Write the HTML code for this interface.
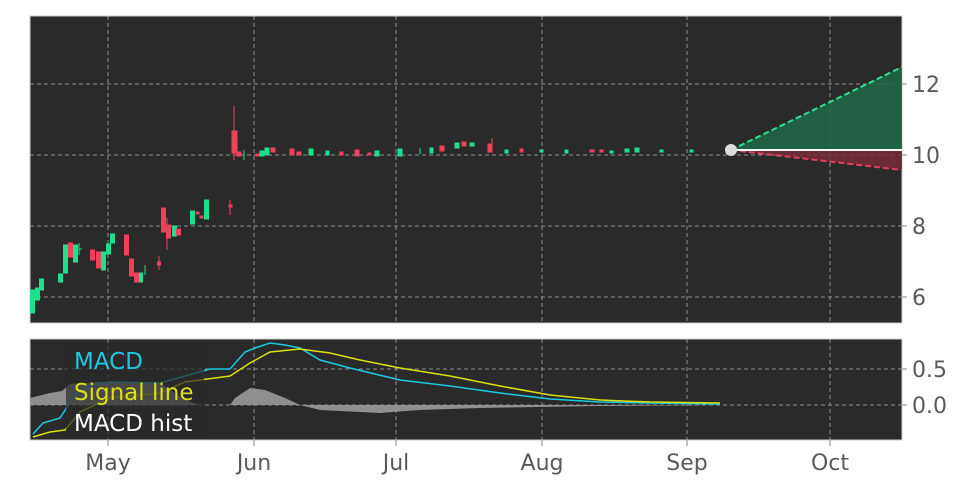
<!DOCTYPE html>
<html><head><style>body{margin:0;background:#fff;}svg{display:block;font-family:"DejaVu Sans","Liberation Sans",sans-serif;}</style></head><body>
<svg width="972" height="486" viewBox="0 0 972 486">
<rect x="30" y="16" width="872" height="307" fill="#2a2a2a"/>
<rect x="30" y="339" width="872" height="101" fill="#2a2a2a"/>
<g stroke="#aaa" stroke-width="1" stroke-dasharray="4,3" opacity="0.8">
<line x1="30" y1="84" x2="902" y2="84"/><line x1="30" y1="155" x2="902" y2="155"/><line x1="30" y1="226" x2="902" y2="226"/><line x1="30" y1="297" x2="902" y2="297"/>
<line x1="30" y1="369" x2="902" y2="369"/><line x1="30" y1="405" x2="902" y2="405"/>
<line x1="108" y1="16" x2="108" y2="323"/><line x1="254" y1="16" x2="254" y2="323"/><line x1="396" y1="16" x2="396" y2="323"/><line x1="542" y1="16" x2="542" y2="323"/><line x1="687" y1="16" x2="687" y2="323"/><line x1="830" y1="16" x2="830" y2="323"/>
<line x1="108" y1="339" x2="108" y2="440"/><line x1="254" y1="339" x2="254" y2="440"/><line x1="396" y1="339" x2="396" y2="440"/><line x1="542" y1="339" x2="542" y2="440"/><line x1="687" y1="339" x2="687" y2="440"/><line x1="830" y1="339" x2="830" y2="440"/>
</g>
<g stroke="#ccc" stroke-width="1">
<rect x="30" y="16" width="872" height="307" fill="none"/>
<rect x="30" y="339" width="872" height="101" fill="none"/>
</g>
<polygon points="731,150 902,67 902,150" fill="#1f6b4a" opacity="0.85"/>
<polygon points="731,150 902,150 902,170" fill="#7a2b3a" opacity="0.8"/>
<line x1="731" y1="150" x2="902" y2="67" stroke="#2ee08a" stroke-width="2" stroke-dasharray="6,3"/>
<line x1="731" y1="150" x2="902" y2="170" stroke="#e0405a" stroke-width="2" stroke-dasharray="6,3"/>
<line x1="731" y1="150" x2="902" y2="150" stroke="#fff" stroke-width="2"/>
<circle cx="731" cy="150" r="6" fill="#ddd"/>
<g fill="#1fe08a" stroke="#1fe08a" stroke-width="1">
<rect x="30.5" y="290" width="4" height="23"/><rect x="35.5" y="288" width="4" height="12"/><rect x="39.5" y="279" width="4" height="11"/><rect x="58.5" y="274" width="4" height="8"/><rect x="63.5" y="245" width="4" height="28"/><rect x="73.5" y="245" width="4" height="17"/><rect x="101.5" y="252" width="4" height="18"/><rect x="106.5" y="244" width="4" height="10"/><rect x="110.5" y="234" width="4" height="9"/><rect x="138.5" y="273" width="4" height="9"/><rect x="172.5" y="226" width="4" height="10"/><rect x="190.5" y="211" width="4" height="13"/><rect x="204.5" y="200" width="4" height="19"/>
<rect x="260" y="151" width="4" height="5"/><rect x="265" y="148" width="4" height="7"/><rect x="309" y="149" width="4" height="6"/><rect x="326" y="151" width="3" height="4"/><rect x="375" y="151" width="4" height="5"/><rect x="398" y="149" width="4" height="7"/><rect x="430" y="148" width="3" height="5"/><rect x="455" y="143" width="4" height="5"/><rect x="470" y="143" width="4" height="3"/><rect x="505" y="150" width="3" height="3"/><rect x="540" y="150" width="3" height="2"/><rect x="565" y="150" width="3" height="3"/><rect x="610" y="151" width="3" height="2"/><rect x="625" y="149" width="4" height="3"/><rect x="635" y="148" width="4" height="4"/><rect x="660" y="150" width="3" height="2"/><rect x="690" y="150" width="3" height="2"/>
<line x1="79" y1="243" x2="79" y2="255"/><line x1="79" y1="249" x2="82" y2="249"/><line x1="145" y1="265" x2="145" y2="275"/><line x1="244" y1="150" x2="244" y2="160"/><line x1="420" y1="148" x2="420" y2="154"/>
</g>
<g fill="#f0405a" stroke="#f0405a" stroke-width="1">
<rect x="68.5" y="243" width="4" height="14"/><rect x="90.5" y="250" width="4" height="10"/><rect x="96.5" y="252" width="4" height="16"/><rect x="124.5" y="235" width="4" height="20"/><rect x="129.5" y="259" width="4" height="17"/><rect x="134.5" y="273" width="4" height="9"/><rect x="157.5" y="262" width="3" height="3"/><rect x="161.5" y="208" width="4" height="24"/><rect x="166.5" y="225" width="4" height="13"/><rect x="176.5" y="229" width="4" height="6"/><rect x="196" y="212" width="3" height="2"/><rect x="200" y="216" width="3" height="2"/><rect x="229" y="205" width="3" height="2"/>
<rect x="232" y="131" width="5" height="22"/><rect x="237" y="152" width="4" height="4"/><rect x="256" y="154" width="3" height="2"/><rect x="271" y="148" width="4" height="4"/><rect x="290" y="149" width="4" height="6"/><rect x="297" y="152" width="4" height="3"/><rect x="340" y="152" width="3" height="3"/><rect x="355" y="150" width="4" height="6"/><rect x="368" y="153" width="3" height="2"/><rect x="440" y="146" width="4" height="5"/><rect x="462" y="142" width="4" height="4"/><rect x="488" y="144" width="4" height="8"/><rect x="520" y="149" width="3" height="3"/><rect x="590" y="150" width="4" height="2"/><rect x="600" y="150" width="3" height="2"/>
<line x1="234" y1="106" x2="234" y2="160"/><line x1="230" y1="200" x2="230" y2="215"/><line x1="159" y1="256" x2="159" y2="270"/><line x1="167" y1="218" x2="167" y2="250"/><line x1="492" y1="138" x2="492" y2="152"/>
</g>
<polygon points="30,405 30,398 50,393 62,391 70,384 100,382 160,383 185,400 200,405 230,405 235,398 250,388 265,390 285,398 300,405 320,410 380,413 420,410 480,408 600,406 720,405 720,405" fill="#9a9a9a" opacity="0.9"/>
<polyline points="33,434 43,423 60,418 75,395 90,385 110,382 160,383 185,376 210,369 230,369 245,352 255,348 270,343 285,345 300,348 320,360 350,368 400,380 450,386 500,393 550,399 600,402 650,403 720,404" fill="none" stroke="#1ec8e0" stroke-width="1.5"/>
<polyline points="33,437 50,432 65,430 80,412 110,398 160,393 185,382 230,376 250,363 270,352 300,349 330,353 360,360 400,368 450,376 500,386 550,395 600,400 650,402 720,403" fill="none" stroke="#dde010" stroke-width="1.5"/>
<rect x="66" y="345" width="138" height="94" fill="#2a2a2a" opacity="0.7"/>
<text x="74" y="369" font-size="23" fill="#1ec8e0">MACD</text>
<text x="74" y="400" font-size="23" fill="#dde010">Signal line</text>
<text x="74" y="431" font-size="23" fill="#fff">MACD hist</text>
<g stroke="#888"><line x1="902" y1="84" x2="907" y2="84"/><line x1="902" y1="155" x2="907" y2="155"/><line x1="902" y1="226" x2="907" y2="226"/><line x1="902" y1="297" x2="907" y2="297"/><line x1="902" y1="369" x2="907" y2="369"/><line x1="902" y1="405" x2="907" y2="405"/>
<line x1="108" y1="440" x2="108" y2="446"/><line x1="254" y1="440" x2="254" y2="446"/><line x1="396" y1="440" x2="396" y2="446"/><line x1="542" y1="440" x2="542" y2="446"/><line x1="687" y1="440" x2="687" y2="446"/><line x1="830" y1="440" x2="830" y2="446"/></g>
<g font-size="22" fill="#5a5a5a">
<text x="912" y="92">12</text><text x="912" y="163">10</text><text x="912" y="234">8</text><text x="912" y="305">6</text>
<text x="912" y="377">0.5</text><text x="912" y="413">0.0</text>
<g text-anchor="middle"><text x="108" y="470">May</text><text x="254" y="470">Jun</text><text x="396" y="470">Jul</text><text x="542" y="470">Aug</text><text x="687" y="470">Sep</text><text x="830" y="470">Oct</text></g>
</g>
</svg>
</body></html>
